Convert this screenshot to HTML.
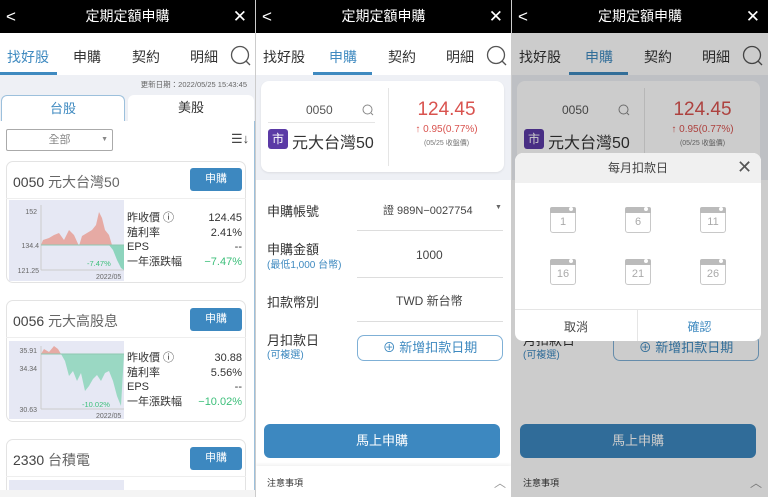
<!DOCTYPE html>
<html><head><meta charset="utf-8"><style>
*{margin:0;padding:0;box-sizing:border-box}
body{width:768px;height:497px;overflow:hidden;background:#fff;font-family:"Liberation Sans","Noto Sans CJK TC",sans-serif;position:relative;color:#333}
.p{position:absolute;top:0;height:497px;overflow:hidden}
.a{position:absolute}
.hd{position:absolute;left:0;top:0;width:100%;height:33px;background:#000;color:#fff;font-size:14px;text-align:center;line-height:33px}
.hd .l{position:absolute;left:6px;top:0;font-size:17px;font-weight:300}
.hd .x{position:absolute;right:8px;top:0;font-size:17px}
.tabs{position:absolute;top:33px;left:0;width:100%;height:42px;background:#fff;font-size:14px}
.tabs span{position:absolute;top:14px}
.blue{color:#3f8ac0}
.btn{background:#3d88c0;color:#fff;border-radius:3px;text-align:center}
.lbl{font-size:13px;color:#333}
.sub{font-size:10px;color:#3f8ac0}
.ln{position:absolute;height:1px;background:#ddd}
.cal{position:absolute;width:26px;height:26px;border:1.5px solid #c8c8c8;border-radius:3px;text-align:center;font-size:11px;color:#aaa;padding-top:8px}
.cal:before{content:"";position:absolute;left:-1px;top:-1px;right:-1px;height:6px;background:#bbb;border-radius:2px 2px 0 0}
.cal:after{content:"";position:absolute;right:2px;top:-1px;width:4px;height:4px;border-radius:50%;background:#fff}
</style></head><body>

<div class="p" style="left:0;width:255px;background:#eef0f5">
<div class="hd"><span class="l">&lt;</span>定期定額申購<span class="x">✕</span></div>
<div class="tabs"><span class="blue" style="left:7px">找好股</span><span style="left:73px">申購</span><span style="left:132px">契約</span><span style="left:190px">明細</span>
<svg class="a" style="left:230px;top:12px" width="22" height="22"><circle cx="10" cy="10" r="8.5" fill="none" stroke="#555" stroke-width="1.3"/><line x1="16" y1="16" x2="20" y2="20" stroke="#555" stroke-width="1.3"/></svg>
<div class="a" style="left:0;top:39px;width:57px;height:3px;background:#3f8ac0"></div></div>
<div class="a" style="right:8px;top:79px;font-size:7.5px;color:#666">更新日期：2022/05/25 15:43:45</div>
<div class="a" style="left:1px;top:95px;width:124px;height:30px;background:#fff;border:1px solid #9cc0dc;border-bottom:none;border-radius:6px 6px 0 0;text-align:center;line-height:26px;font-size:13px"><span class="blue">台股</span></div>
<div class="a" style="left:128px;top:95px;width:126px;height:26px;background:#fff;border-radius:6px 6px 0 0;text-align:center;line-height:26px;font-size:13px">美股</div>
<div class="a" style="left:0;top:121px;width:255px;height:376px;background:#fff;border-right:1px solid #9cc0dc"></div>
<div class="a" style="left:0;top:121px;width:125px;height:4px;background:#fff"></div>
<div class="a" style="left:6px;top:129px;width:107px;height:22px;border:1px solid #aaa;border-radius:2px;font-size:11px;color:#888;text-align:center;line-height:20px">全部<span style="position:absolute;right:4px;font-size:7px">▼</span></div>
<div class="a" style="left:231px;top:131px;font-size:13px;color:#444">☰↓</div>

<div class="a" style="left:6px;top:161px;width:240px;height:122px;border:1px solid #e3e3e3;border-radius:7px;background:#fff"></div>
<div class="a" style="left:6px;top:198px;width:240px;height:1px;background:#eee"></div>
<div class="a" style="left:13px;top:172px;font-size:14px"><span style="color:#444">0050</span> <span style="color:#666">元大台灣50</span></div>
<div class="a btn" style="left:190px;top:168px;width:52px;height:23px;font-size:11px;line-height:23px">申購</div>
<svg class="a" style="left:9px;top:200px" width="115" height="81"><rect width="115" height="81" fill="#e6e8f4"/><line x1="32" y1="5" x2="32" y2="70" stroke="#ccc"/><line x1="32" y1="70" x2="115" y2="70" stroke="#ccc"/>
<path d="M32 45 L34 40 L40 38 L45 35 L50 33 L55 40 L60 30 L65 35 L70 46 L73 36 L78 33 L83 30 L87 25 L90 12 L93 18 L96 30 L100 35 L103 45 Z" fill="#e6aaa4"/>
<path d="M100 45 L104 50 L108 60 L112 68 L115 70 L115 45 Z" fill="#8dd4bd"/>
<line x1="32" y1="45" x2="115" y2="45" stroke="#8dc8b0"/>
<text x="28" y="14" font-size="7" fill="#666" text-anchor="end">152</text><text x="30" y="48" font-size="7" fill="#666" text-anchor="end">134.4</text><text x="30" y="73" font-size="7" fill="#666" text-anchor="end">121.25</text>
<text x="78" y="66" font-size="7.5" fill="#3cbf7a">-7.47%</text><text x="87" y="79" font-size="7" fill="#666">2022/05</text></svg>
<div class="a" style="left:127px;top:211px;width:115px;font-size:11px;line-height:14.5px;color:#333">昨收價 ⓘ<span style="float:right">124.45</span><br>殖利率<span style="float:right">2.41%</span><br>EPS<span style="float:right">--</span><br>一年漲跌幅<span style="float:right;color:#3cbf7a">−7.47%</span></div>

<div class="a" style="left:6px;top:300px;width:240px;height:122px;border:1px solid #e3e3e3;border-radius:7px;background:#fff"></div>
<div class="a" style="left:6px;top:337px;width:240px;height:1px;background:#eee"></div>
<div class="a" style="left:13px;top:311px;font-size:14px"><span style="color:#444">0056</span> <span style="color:#666">元大高股息</span></div>
<div class="a btn" style="left:190px;top:308px;width:52px;height:23px;font-size:11px;line-height:23px">申購</div>
<svg class="a" style="left:9px;top:341px" width="115" height="78"><rect width="115" height="78" fill="#e6e8f4"/><line x1="32" y1="5" x2="32" y2="68" stroke="#ccc"/><line x1="32" y1="68" x2="115" y2="68" stroke="#ccc"/>
<path d="M32 13 L35 8 L40 11 L45 5 L49 8 L52 13 Z" fill="#e6aaa4"/>
<path d="M52 13 L56 20 L60 35 L64 30 L68 40 L72 32 L76 50 L80 45 L84 38 L88 34 L92 40 L96 32 L100 30 L104 40 L108 55 L112 65 L115 13 Z" fill="#9ad8c3"/>
<line x1="32" y1="13" x2="115" y2="13" stroke="#8dc8b0"/>
<text x="28" y="12" font-size="7" fill="#666" text-anchor="end">35.91</text><text x="28" y="30" font-size="7" fill="#666" text-anchor="end">34.34</text><text x="28" y="71" font-size="7" fill="#666" text-anchor="end">30.63</text>
<text x="73" y="66" font-size="7.5" fill="#3cbf7a">-10.02%</text><text x="87" y="77" font-size="7" fill="#666">2022/05</text></svg>
<div class="a" style="left:127px;top:351px;width:115px;font-size:11px;line-height:14.5px">昨收價 ⓘ<span style="float:right">30.88</span><br>殖利率<span style="float:right">5.56%</span><br>EPS<span style="float:right">--</span><br>一年漲跌幅<span style="float:right;color:#3cbf7a">−10.02%</span></div>

<div class="a" style="left:6px;top:439px;width:240px;height:80px;border:1px solid #e3e3e3;border-radius:7px;background:#fff"></div>
<div class="a" style="left:6px;top:476px;width:240px;height:1px;background:#eee"></div>
<div class="a" style="left:13px;top:450px;font-size:14px"><span style="color:#444">2330</span> <span style="color:#666">台積電</span></div>
<div class="a btn" style="left:190px;top:447px;width:52px;height:23px;font-size:11px;line-height:23px">申購</div>
<div class="a" style="left:9px;top:480px;width:115px;height:10px;background:#e6e8f4"></div>
<div class="a" style="left:0;top:490px;width:255px;height:7px;background:#f4f4f4"></div>
</div>
<div class="a" style="left:255px;top:0;width:1px;height:497px;background:#ccc"></div>

<div class="p" style="left:256px;width:255px;background:#fff">
<div class="hd"><span class="l">&lt;</span>定期定額申購<span class="x">✕</span></div>
<div class="tabs"><span style="left:7px">找好股</span><span class="blue" style="left:73px">申購</span><span style="left:132px">契約</span><span style="left:190px">明細</span>
<svg class="a" style="left:230px;top:12px" width="22" height="22"><circle cx="10" cy="10" r="8.5" fill="none" stroke="#555" stroke-width="1.3"/><line x1="16" y1="16" x2="20" y2="20" stroke="#555" stroke-width="1.3"/></svg>
<div class="a" style="left:57px;top:39px;width:59px;height:3px;background:#3f8ac0"></div></div>
<div class="a" style="left:0;top:75px;width:255px;height:105px;background:#eef0f5"></div>
<div class="a" style="left:5px;top:81px;width:243px;height:91px;background:#fff;border-radius:8px;box-shadow:0 1px 2px rgba(0,0,0,.08)"></div>
<div class="a" style="left:50px;top:103px;font-size:12px;color:#555">0050</div>
<svg class="a" style="left:106px;top:104px" width="12" height="12"><circle cx="5.5" cy="5.5" r="4.5" fill="none" stroke="#888"/><line x1="9" y1="9" x2="11" y2="11" stroke="#888"/></svg>
<div class="a" style="left:12px;top:122px;width:107px;height:1px;background:#e5e5e5"></div>
<div class="a" style="left:12px;top:129px;width:20px;height:20px;background:#5b3aa6;border-radius:3px;color:#fff;font-size:12px;text-align:center;line-height:20px">市</div>
<div class="a" style="left:36px;top:129px;font-size:16px;color:#333">元大台灣50</div>
<div class="a" style="left:132px;top:88px;width:1px;height:78px;background:#e5e5e5"></div>
<div class="a" style="left:133px;top:99px;width:115px;text-align:center;color:#d9534f;font-size:19px">124.45</div>
<div class="a" style="left:133px;top:124px;width:115px;text-align:center;color:#d9534f;font-size:10px">↑ 0.95(0.77%)</div>
<div class="a" style="left:133px;top:138px;width:115px;text-align:center;color:#777;font-size:7px">(05/25 收盤價)</div>
<div class="a lbl" style="left:11px;top:201px">申購帳號</div>
<div class="a" style="left:127px;top:202px;font-size:11px;color:#444">證 989N−0027754</div>
<div class="a" style="left:239px;top:204px;font-size:7px;color:#666">▼</div>
<div class="ln" style="left:101px;top:230px;width:146px"></div>
<div class="a lbl" style="left:11px;top:239px">申購金額</div><div class="a sub" style="left:11px;top:256px">(最低1,000 台幣)</div>
<div class="a" style="left:160px;top:248px;font-size:12px;color:#444">1000</div>
<div class="ln" style="left:101px;top:277px;width:146px"></div>
<div class="a lbl" style="left:11px;top:292px">扣款幣別</div>
<div class="a" style="left:140px;top:292px;font-size:12px;color:#444">TWD 新台幣</div>
<div class="ln" style="left:101px;top:321px;width:146px"></div>
<div class="a lbl" style="left:11px;top:330px">月扣款日</div><div class="a sub" style="left:11px;top:346px">(可複選)</div>
<div class="a" style="left:101px;top:335px;width:146px;height:26px;border:1px solid #7fb0d6;border-radius:7px;text-align:center;line-height:24px;font-size:13px;color:#3f8ac0">⊕ 新增扣款日期</div>
<div class="a btn" style="left:8px;top:424px;width:236px;height:34px;border-radius:6px;line-height:34px;font-size:13px">馬上申購</div>
<div class="a" style="left:0;top:466px;width:255px;height:31px;background:#fff;box-shadow:0 -2px 3px rgba(0,0,0,.05)"></div>
<div class="a" style="left:11px;top:476px;font-size:9px;color:#333">注意事項</div>
<div class="a" style="left:238px;top:474px;font-size:12px;color:#999">︿</div>
</div>
<div class="a" style="left:511px;top:0;width:1px;height:497px;background:#ccc"></div>

<div class="p" style="left:512px;width:256px;background:#fff">
<div class="hd" style="z-index:2"><span class="l">&lt;</span>定期定額申購<span class="x">✕</span></div>
<div class="tabs"><span style="left:7px">找好股</span><span class="blue" style="left:73px">申購</span><span style="left:132px">契約</span><span style="left:190px">明細</span>
<svg class="a" style="left:230px;top:12px" width="22" height="22"><circle cx="10" cy="10" r="8.5" fill="none" stroke="#555" stroke-width="1.3"/><line x1="16" y1="16" x2="20" y2="20" stroke="#555" stroke-width="1.3"/></svg>
<div class="a" style="left:57px;top:39px;width:59px;height:3px;background:#3f8ac0"></div></div>
<div class="a" style="left:0;top:75px;width:256px;height:105px;background:#eef0f5"></div>
<div class="a" style="left:5px;top:81px;width:243px;height:91px;background:#fff;border-radius:8px"></div>
<div class="a" style="left:50px;top:103px;font-size:12px;color:#555">0050</div>
<svg class="a" style="left:106px;top:104px" width="12" height="12"><circle cx="5.5" cy="5.5" r="4.5" fill="none" stroke="#888"/><line x1="9" y1="9" x2="11" y2="11" stroke="#888"/></svg>
<div class="a" style="left:12px;top:129px;width:20px;height:20px;background:#5b3aa6;border-radius:3px;color:#fff;font-size:12px;text-align:center;line-height:20px">市</div>
<div class="a" style="left:36px;top:129px;font-size:16px;color:#333">元大台灣50</div>
<div class="a" style="left:132px;top:88px;width:1px;height:78px;background:#e5e5e5"></div>
<div class="a" style="left:133px;top:99px;width:115px;text-align:center;color:#d9534f;font-size:19px">124.45</div>
<div class="a" style="left:133px;top:124px;width:115px;text-align:center;color:#d9534f;font-size:10px">↑ 0.95(0.77%)</div>
<div class="a" style="left:133px;top:138px;width:115px;text-align:center;color:#777;font-size:7px">(05/25 收盤價)</div>
<div class="a lbl" style="left:11px;top:330px">月扣款日</div>
<div class="a sub" style="left:11px;top:346px">(可複選)</div>
<div class="a" style="left:101px;top:335px;width:146px;height:26px;border:1px solid #7fb0d6;border-radius:7px;text-align:center;line-height:24px;font-size:13px;color:#3f8ac0">⊕ 新增扣款日期</div>
<div class="a btn" style="left:8px;top:424px;width:236px;height:34px;border-radius:6px;line-height:34px;font-size:13px">馬上申購</div>
<div class="a" style="left:0;top:466px;width:256px;height:31px;background:#fff"></div>
<div class="a" style="left:11px;top:476px;font-size:9px;color:#333">注意事項</div>
<div class="a" style="left:238px;top:474px;font-size:12px;color:#999">︿</div>
<div class="a" style="left:0;top:0;width:256px;height:497px;background:rgba(0,0,0,.2)"></div>
<div class="a" style="left:3px;top:153px;width:246px;height:188px;background:#fff;border-radius:8px;overflow:hidden">
<div class="a" style="left:0;top:0;width:246px;height:30px;background:#f0f0f0;text-align:center;line-height:30px;font-size:12px;color:#444">每月扣款日</div>
<div class="a" style="left:222px;top:4px;font-size:18px;color:#555">✕</div>
<div class="cal" style="left:35px;top:54px">1</div><div class="cal" style="left:110px;top:54px">6</div><div class="cal" style="left:185px;top:54px">11</div>
<div class="cal" style="left:35px;top:106px">16</div><div class="cal" style="left:110px;top:106px">21</div><div class="cal" style="left:185px;top:106px">26</div>
<div class="a" style="left:0;top:156px;width:246px;height:1px;background:#e5e5e5"></div>
<div class="a" style="left:122px;top:156px;width:1px;height:32px;background:#e5e5e5"></div>
<div class="a" style="left:0;top:165px;width:122px;text-align:center;font-size:12px;color:#444">取消</div>
<div class="a" style="left:123px;top:165px;width:123px;text-align:center;font-size:12px;color:#3f8ac0">確認</div>
</div>
</div>
</body></html>
